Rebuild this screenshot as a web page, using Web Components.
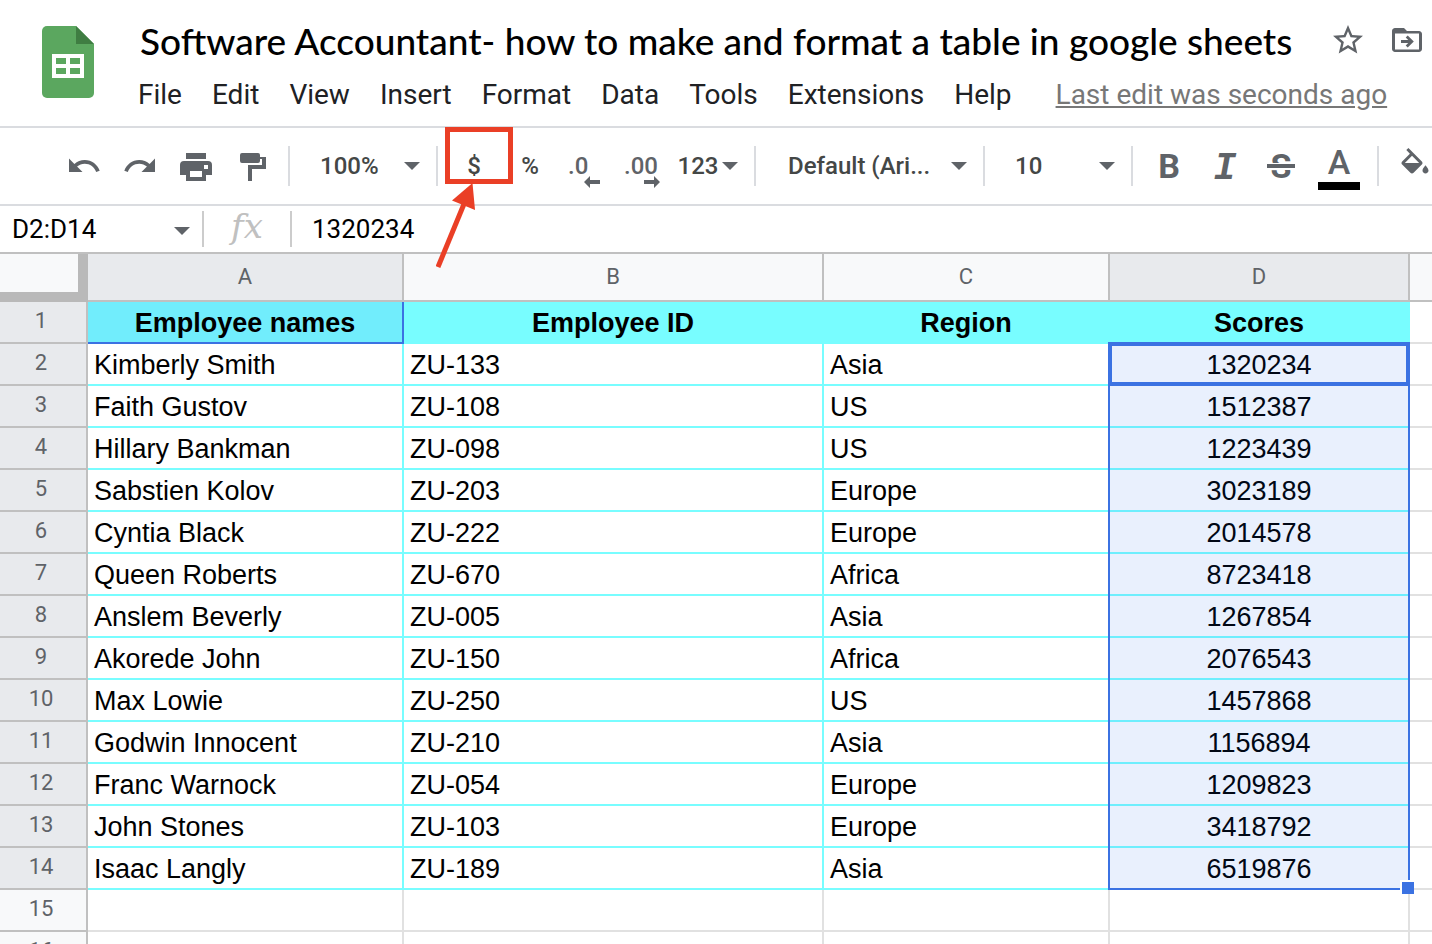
<!DOCTYPE html>
<html lang="en">
<head>
  <meta charset="utf-8">
  <meta name="viewport" content="width=device-width, initial-scale=1">
  <title>Software Accountant- how to make and format a table in google sheets</title>
  <style>
    html, body {
      height: 100%;
      margin: 0;
    }

    body {
      overflow: hidden;
      background: #ffffff;
      font-family: Roboto, "Liberation Sans", sans-serif;
      --icon: #5f6368;
      --line: #dadce0;
      --grid-line: #c0c0c0;
      --blue: #3b72e2;
      --cyan: #78fdff;
    }
  </style>
</head>
<body>
  <sheet-app></sheet-app>

  <script>
    const SHAPES = {
      undo: '<path d="M12.5 8c-2.65 0-5.05.99-6.9 2.6L2 7v9h9l-3.62-3.62c1.39-1.16 3.16-1.88 5.12-1.88 3.54 0 6.55 2.31 7.6 5.5l2.37-.78C21.08 11.03 17.15 8 12.5 8z"/>',
      redo: '<path d="M18.4 10.6C16.55 8.99 14.15 8 11.5 8c-4.65 0-8.58 3.03-9.96 7.22L3.9 16c1.05-3.19 4.05-5.5 7.6-5.5 1.95 0 3.73.72 5.12 1.88L13 16h9V7l-3.6 3.6z"/>',
      print: '<path fill-rule="evenodd" transform="scale(.66667)" d="M8 5h20v6H8zM6 13h24a4 4 0 0 1 4 4v10h-6v6H8v-6H2V17a4 4 0 0 1 4-4zM12 23v6h12v-6zM26 17v4h4v-4z"/>',
      paint: '<path transform="scale(.66667)" d="M8 5h16a2 2 0 0 1 2 2v2h6v12H18v12h-4V17h14v-6h-2v2a2 2 0 0 1-2 2H8a2 2 0 0 1-2-2V7a2 2 0 0 1 2-2z"/>',
      fill: '<path d="M16.56 8.94L7.62 0 6.21 1.41l2.38 2.38-5.15 5.15c-.59.59-.59 1.54 0 2.12l5.5 5.5c.29.29.68.44 1.06.44s.77-.15 1.06-.44l5.5-5.5c.59-.58.59-1.53 0-2.12zM5.21 10L10 5.21 14.79 10H5.21zM19 11.5s-2 2.17-2 3.5c0 1.1.9 2 2 2s2-.9 2-2c0-1.33-2-3.5-2-3.5z"/>',
      star: '<path d="M22 9.24l-7.19-.62L12 2 9.19 8.63 2 9.24l5.46 4.73L5.82 21 12 17.27 18.18 21l-1.63-7.03L22 9.24zM12 15.4l-3.76 2.27 1-4.28-3.32-2.88 4.38-.38L12 6.1l1.71 4.04 4.38.38-3.32 2.88 1 4.28L12 15.4z"/>',
      move: '<path fill-rule="evenodd" d="M20 6h-8l-2-2H4c-1.1 0-2 .9-2 2v12c0 1.1.9 2 2 2h16c1.1 0 2-.9 2-2V8c0-1.1-.9-2-2-2zM20 18.4H4V7.6h16z"/><path d="M8 13h7M11.8 9.6l3.4 3.4-3.4 3.4" fill="none" stroke="currentColor" stroke-width="1.9"/>',
    };

    class SheetIcon extends HTMLElement {
      constructor() {
        super();
        this.attachShadow({ mode: 'open' });
      }

      connectedCallback() {
        this.shadowRoot.innerHTML = `
          <style>
            :host { display: block; width: 36px; height: 36px; }
            svg { display: block; fill: currentColor; }
          </style>
          <svg width="36" height="36" viewBox="0 0 24 24" aria-hidden="true">${SHAPES[this.getAttribute('name')]}</svg>
        `;
      }
    }
    customElements.define('sheet-icon', SheetIcon);

    class DropArrow extends HTMLElement {
      constructor() {
        super();
        this.attachShadow({ mode: 'open' }).innerHTML = `
          <style>
            :host {
              display: block;
              width: 0;
              border: 8px solid transparent;
              border-top-color: var(--icon);
              border-bottom: 0;
              pointer-events: none;
            }
          </style>
        `;
      }
    }
    customElements.define('drop-arrow', DropArrow);

    class ToolButton extends HTMLElement {
      constructor() {
        super();
        this.attachShadow({ mode: 'open' });
      }

      connectedCallback() {
        this.shadowRoot.innerHTML = `
          <style>
            :host {
              display: flex;
              position: relative;
              flex: none;
              width: 56px;
            }
            :host([wide]) { width: 76px; }
            button {
              flex: 1;
              display: flex;
              align-items: center;
              justify-content: center;
              gap: 4px;
              padding: 0;
              border: 0;
              background: none;
              color: inherit;
              font: inherit;
            }
          </style>
          <button aria-label="${this.getAttribute('label')}"><slot></slot></button>
          <slot name="over"></slot>
        `;
      }
    }
    customElements.define('tool-button', ToolButton);

    class ToolSelect extends HTMLElement {
      constructor() {
        super();
        this.attachShadow({ mode: 'open' });
      }

      connectedCallback() {
        const label = this.getAttribute('label');
        this.shadowRoot.innerHTML = `
          <style>
            :host { display: grid; flex: none; width: 130px; }
            :host([wide]) { width: 211px; }
            select, drop-arrow { grid-area: 1 / 1; align-self: center; }
            select {
              appearance: none;
              margin: 0;
              padding: 0 0 0 22px;
              border: 0;
              background: none;
              color: inherit;
              font: inherit;
              line-height: 32px;
            }
            :host([wide]) select { padding-left: 24px; }
            drop-arrow { justify-self: end; margin-right: 8px; }
          </style>
          <select aria-label="${label}"><option>${this.getAttribute('value')}</option></select>
          <drop-arrow></drop-arrow>
        `;
      }
    }
    customElements.define('tool-select', ToolSelect);

    class DecimalIcon extends HTMLElement {
      constructor() {
        super();
        this.attachShadow({ mode: 'open' });
      }

      connectedCallback() {
        const more = this.hasAttribute('more');
        const arrow = more ? 'M0 4h10V0l6 6-6 6V8H0z' : 'M16 4H6V0L0 6l6 6V8h10z';
        this.shadowRoot.innerHTML = `
          <style>
            :host { display: grid; width: 36px; height: 44px; color: var(--icon); text-align: left; }
            span { grid-area: 1 / 1; line-height: 44px; }
            svg { grid-area: 1 / 1; place-self: end; fill: currentColor; }
            :host(:not([more])) svg { margin-right: 4px; }
          </style>
          <span>${more ? '.00' : '.0'}</span>
          <svg width="16" height="12" viewBox="0 0 16 12" aria-hidden="true"><path d="${arrow}"/></svg>
        `;
      }
    }
    customElements.define('decimal-icon', DecimalIcon);

    // red frame and arrow pointing at the currency button
    class CalloutMark extends HTMLElement {
      constructor() {
        super();
        this.attachShadow({ mode: 'open' }).innerHTML = `
          <style>
            :host {
              position: absolute;
              top: -2px;
              left: -10px;
              z-index: 5;
              pointer-events: none;
            }
            svg { display: block; }
          </style>
          <svg width="80" height="146" viewBox="0 0 80 146" aria-hidden="true">
            <rect x="11.5" y="3.5" width="63" height="52" fill="none" stroke="#ea3f26" stroke-width="5"/>
            <path d="M2 141L28 78" stroke="#ea3f26" stroke-width="5"/>
            <path d="M36.5 57L16 74.5L39 84z" fill="#ea3f26"/>
          </svg>
        `;
      }
    }
    customElements.define('callout-mark', CalloutMark);

    class SheetHeader extends HTMLElement {
      constructor() {
        super();
        this.attachShadow({ mode: 'open' });
      }

      connectedCallback() {
        const menus = ['File', 'Edit', 'View', 'Insert', 'Format', 'Data', 'Tools', 'Extensions', 'Help'];
        this.shadowRoot.innerHTML = `
          <style>
            :host {
              display: flex;
              gap: 44px;
              padding: 14px 0 6px 42px;
              border-bottom: 2px solid var(--line);
            }
            .logo { flex: none; margin-top: 12px; }
            .info { flex: 1; min-width: 0; }
            .title, nav { display: flex; align-items: center; white-space: nowrap; }
            .title { height: 52px; padding-left: 2px; }
            h1 {
              margin: 0 38px 0 0;
              font: 500 37px Lato, sans-serif;
              color: #000000;
            }
            .title button {
              margin: 0 23px 0 0;
              padding: 0;
              border: 0;
              background: none;
              color: var(--icon);
            }
            nav { height: 54px; gap: 30px; }
            nav button, nav a { padding: 2px 0 0; border: 0; background: none; font: 28px Roboto, sans-serif; }
            nav button { color: #202124; }
            nav a { margin-left: 14px; color: #777777; text-decoration: underline; }
          </style>
          <svg class="logo" width="52" height="72" viewBox="0 0 52 72" role="img" aria-label="Sheets">
            <path fill="#5ba75f" d="M5 0h29l18 18v49a5 5 0 0 1-5 5H5a5 5 0 0 1-5-5V5a5 5 0 0 1 5-5z"/>
            <path fill="#3f7d42" d="M34 0l18 18H34z"/>
            <path fill="#ffffff" fill-rule="evenodd" d="M10 28h32v24H10zM14 32v6h10v-6zM28 32v6h10v-6zM14 42v6h10v-6zM28 42v6h10v-6z"/>
          </svg>
          <div class="info">
            <div class="title">
              <h1>Software Accountant- how to make and format a table in google sheets</h1>
              <button aria-label="Star"><sheet-icon name="star"></sheet-icon></button>
              <button aria-label="Move"><sheet-icon name="move"></sheet-icon></button>
            </div>
            <nav>
              ${menus.map((name) => `<button>${name}</button>`).join('')}
              <a href="#history">Last edit was seconds ago</a>
            </nav>
          </div>
        `;
      }
    }
    customElements.define('sheet-header', SheetHeader);

    class SheetToolbar extends HTMLElement {
      constructor() {
        super();
        this.attachShadow({ mode: 'open' });
      }

      connectedCallback() {
        this.shadowRoot.innerHTML = `
          <style>
            :host {
              display: flex;
              height: 76px;
              padding-left: 56px;
              border-bottom: 2px solid var(--line);
              font-size: 24px;
              font-weight: 500;
              color: #444746;
            }
            hr {
              flex: none;
              align-self: center;
              width: 2px;
              height: 40px;
              margin: 0 8px;
              border: 0;
              background: var(--line);
            }
            sheet-icon, .glyph { color: var(--icon); }
            .glyph { font-size: 34px; font-weight: 700; line-height: 40px; }
            .italic {
              padding-top: 6px;
              font-family: "Liberation Mono", monospace;
              font-size: 38px;
              font-style: italic;
            }
            .strike { display: grid; justify-items: center; }
            .strike span { grid-area: 1 / 1; }
            .strike::after {
              content: "";
              grid-area: 1 / 1;
              align-self: center;
              width: 28px;
              height: 4px;
              border: solid #ffffff;
              border-width: 1px 0 2px;
              background: var(--icon);
            }
            .color {
              width: 42px;
              padding: 4px 0;
              border-bottom: 8px solid #000000;
              font-weight: 500;
              line-height: 32px;
            }
            .text-color { width: 60px; }
          </style>
          <tool-button label="Undo"><sheet-icon name="undo"></sheet-icon></tool-button>
          <tool-button label="Redo"><sheet-icon name="redo"></sheet-icon></tool-button>
          <tool-button label="Print"><sheet-icon name="print"></sheet-icon></tool-button>
          <tool-button label="Paint format"><sheet-icon name="paint"></sheet-icon></tool-button>
          <hr>
          <tool-select label="Zoom" value="100%"></tool-select>
          <hr>
          <tool-button label="Format as currency">$<callout-mark slot="over"></callout-mark></tool-button>
          <tool-button label="Format as percent">%</tool-button>
          <tool-button label="Decrease decimal places"><decimal-icon></decimal-icon></tool-button>
          <tool-button label="Increase decimal places"><decimal-icon more></decimal-icon></tool-button>
          <tool-button label="More formats" wide>123<drop-arrow></drop-arrow></tool-button>
          <hr>
          <tool-select label="Font" value="Default (Ari..." wide></tool-select>
          <hr>
          <tool-select label="Font size" value="10"></tool-select>
          <hr>
          <tool-button label="Bold"><span class="glyph">B</span></tool-button>
          <tool-button label="Italic"><span class="glyph italic">I</span></tool-button>
          <tool-button label="Strikethrough"><span class="glyph strike"><span>S</span></span></tool-button>
          <tool-button class="text-color" label="Text color"><span class="glyph color">A</span></tool-button>
          <hr>
          <tool-button label="Fill color"><sheet-icon name="fill"></sheet-icon></tool-button>
        `;
      }
    }
    customElements.define('sheet-toolbar', SheetToolbar);

    class FormulaBar extends HTMLElement {
      constructor() {
        super();
        this.attachShadow({ mode: 'open' }).innerHTML = `
          <style>
            :host {
              display: flex;
              align-items: center;
              height: 46px;
              border-bottom: 2px solid var(--grid-line);
            }
            input {
              box-sizing: border-box;
              margin: 0;
              padding: 0;
              border: 0;
              outline: 0;
              background: none;
              color: #000000;
              font: 26px Roboto, sans-serif;
            }
            .name { width: 174px; padding-left: 12px; }
            .rule { flex: none; width: 2px; height: 36px; background: #cccccc; }
            .name + drop-arrow { margin: 4px 12px 0 0; }
            .fx {
              width: 86px;
              padding-bottom: 6px;
              text-align: center;
              font: italic 34px/40px "DejaVu Serif", "Liberation Serif", serif;
              color: #c0c0c0;
            }
            .formula { flex: 1; padding-left: 20px; }
          </style>
          <input class="name" aria-label="Name box" value="D2:D14">
          <drop-arrow></drop-arrow>
          <div class="rule"></div>
          <div class="fx">fx</div>
          <div class="rule"></div>
          <input class="formula" aria-label="Formula" value="1320234">
        `;
      }
    }
    customElements.define('formula-bar', FormulaBar);

    class RangeSelection extends HTMLElement {
      constructor() {
        super();
        this.attachShadow({ mode: 'open' }).innerHTML = `
          <style>
            :host {
              position: absolute;
              inset: -2px -2px auto;
              height: calc(var(--rows) * 42px + 2px);
              box-sizing: border-box;
              border: 2px solid var(--blue);
              background: rgba(14, 85, 228, 0.09);
              z-index: 1;
              pointer-events: none;
            }
            .active {
              height: 36px;
              margin: -2px;
              border: 4px solid var(--blue);
            }
            .handle {
              position: absolute;
              right: -6px;
              bottom: -6px;
              width: 12px;
              height: 12px;
              border: solid #ffffff;
              border-width: 2px 0 0 2px;
              background: var(--blue);
            }
          </style>
          <div class="active"></div>
          <div class="handle"></div>
        `;
      }
    }
    customElements.define('range-selection', RangeSelection);

    class SheetGrid extends HTMLElement {
      constructor() {
        super();
        this.attachShadow({ mode: 'open' });
        this._data = [];
      }

      set data(value) {
        this._data = value;
        this.render();
      }

      renderRow(number) {
        const row = this._data[number - 1];
        const cells = [0, 1, 2, 3].map((col) => {
          const text = row ? row[col] : '';
          const selection = number === 2 && col === 3
            ? `<range-selection style="--rows: ${this._data.length - 1}"></range-selection>`
            : '';
          return `<td>${text}${selection}</td>`;
        }).join('');
        const kind = number === 1 ? 'titles' : row ? 'filled' : 'empty';
        return `<tr class="${kind}"><th scope="row">${number}</th>${cells}<td></td></tr>`;
      }

      render() {
        const rows = [];
        for (let number = 1; number <= 16; number++) {
          rows.push(this.renderRow(number));
        }
        this.shadowRoot.innerHTML = `
          <style>
            :host { display: block; flex: 1; min-height: 0; overflow: hidden; }
            table { width: 100%; table-layout: fixed; border-spacing: 0; }
            .rows { width: 88px; }
            .a { width: 316px; }
            .b { width: 420px; }
            .c { width: 286px; }
            .d { width: 300px; }
            th, td {
              box-sizing: border-box;
              height: 42px;
              padding: 0;
              border: solid #e1e1e1;
              border-width: 0 2px 2px 0;
              white-space: nowrap;
            }
            th {
              background: #f8f9fa;
              border-color: var(--grid-line);
              color: #5f6368;
              font-size: 22px;
              font-weight: 400;
              line-height: 26px;
            }
            tbody th { padding: 0 4px 2px 0; }
            thead th { height: 48px; }
            thead .corner { border-width: 0 10px 10px 0; border-color: #b9b9b9; }
            .picked, .titles th, .filled th { background: #e8eaed; }
            td {
              padding: 2px 6px 0;
              color: #000000;
              font: 27px/32px "Liberation Sans", Arial, sans-serif;
            }
            td:nth-child(5) { position: relative; text-align: center; }
            .filled td:not(:last-child) { border-color: var(--cyan); }
            .titles td:not(:last-child) {
              background: var(--cyan);
              border-color: var(--cyan);
              font-weight: 700;
              text-align: center;
            }
            .titles td:nth-child(2) { background: #71edfc; border-color: var(--blue); }
            tr > :last-child { border-right: 0; }
          </style>
          <table>
            <colgroup>
              <col class="rows"><col class="a"><col class="b"><col class="c"><col class="d"><col>
            </colgroup>
            <thead>
              <tr>
                <th class="corner"></th>
                <th class="picked" scope="col">A</th>
                <th scope="col">B</th>
                <th scope="col">C</th>
                <th class="picked" scope="col">D</th>
                <th></th>
              </tr>
            </thead>
            <tbody>${rows.join('')}</tbody>
          </table>
        `;
      }
    }
    customElements.define('sheet-grid', SheetGrid);

    class SheetApp extends HTMLElement {
      constructor() {
        super();
        this.attachShadow({ mode: 'open' });
      }

      connectedCallback() {
        this.shadowRoot.innerHTML = `
          <style>
            :host { display: flex; flex-direction: column; height: 100%; }
            sheet-header, sheet-toolbar, formula-bar { flex: none; }
          </style>
          <sheet-header></sheet-header>
          <sheet-toolbar></sheet-toolbar>
          <formula-bar></formula-bar>
          <sheet-grid></sheet-grid>
        `;
        this.shadowRoot.querySelector('sheet-grid').data = [
          ['Employee names', 'Employee ID', 'Region', 'Scores'],
          ['Kimberly Smith', 'ZU-133', 'Asia', '1320234'],
          ['Faith Gustov', 'ZU-108', 'US', '1512387'],
          ['Hillary Bankman', 'ZU-098', 'US', '1223439'],
          ['Sabstien Kolov', 'ZU-203', 'Europe', '3023189'],
          ['Cyntia Black', 'ZU-222', 'Europe', '2014578'],
          ['Queen Roberts', 'ZU-670', 'Africa', '8723418'],
          ['Anslem Beverly', 'ZU-005', 'Asia', '1267854'],
          ['Akorede John', 'ZU-150', 'Africa', '2076543'],
          ['Max Lowie', 'ZU-250', 'US', '1457868'],
          ['Godwin Innocent', 'ZU-210', 'Asia', '1156894'],
          ['Franc Warnock', 'ZU-054', 'Europe', '1209823'],
          ['John Stones', 'ZU-103', 'Europe', '3418792'],
          ['Isaac Langly', 'ZU-189', 'Asia', '6519876'],
        ];
      }
    }
    customElements.define('sheet-app', SheetApp);
  </script>
</body>
</html>
